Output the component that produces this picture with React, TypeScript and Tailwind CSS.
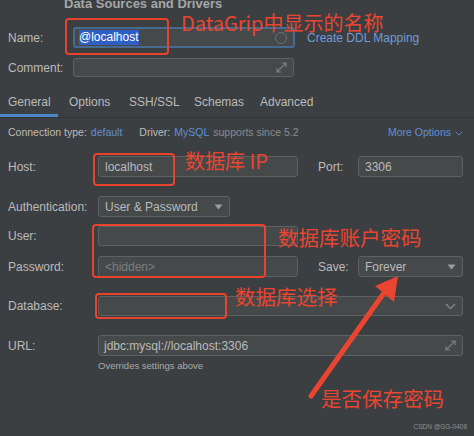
import React from "react"

// darcula-ish palette picked from the screenshot
const field = "border border-[#5e6163] bg-[#45494a] rounded-[3px]"

const Triangle = () => (
    <svg width="9" height="6" viewBox="0 0 9 6" className="shrink-0">
        <path d="M0.5 0.5 L8.5 0.5 L4.5 5.5 Z" fill="#9a9da0" />
    </svg>
)

const Chevron = ({ size = 12, color = "#8a8d90" }: { size?: number; color?: string }) => (
    <svg width={size} height={size * 0.6} viewBox="0 0 12 7" className="shrink-0">
        <path d="M1 1 L6 6 L11 1" fill="none" stroke={color} strokeWidth="1.3" />
    </svg>
)

const Expand = () => (
    <svg width="11" height="11" viewBox="0 0 11 11" className="shrink-0">
        <path
            d="M1 10 L10 1 M6 1 H10 V5 M1 6 V10 H5"
            fill="none"
            stroke="#7d8083"
            strokeWidth="1.1"
        />
    </svg>
)

const Label = ({ children, w = "w-[98px]" }: { children: React.ReactNode; w?: string }) => (
    <div className={`${w} shrink-0 pl-[8px]`}>{children}</div>
)

const Annot = ({ children, className }: { children: React.ReactNode; className: string }) => (
    <div
        className={`absolute whitespace-nowrap leading-none text-[#ea4531] font-['Noto_Sans_CJK_SC','Noto_Sans',sans-serif] ${className}`}
    >
        {children}
    </div>
)

const Box = ({ className }: { className: string }) => (
    <div className={`absolute border-2 border-[#e8432f] rounded-[4px] ${className}`} />
)

const tabs = [
    { label: "General", w: "w-[61px]" },
    { label: "Options", w: "w-[60px]" },
    { label: "SSH/SSL", w: "w-[65px]" },
    { label: "Schemas", w: "w-[66px]" },
    { label: "Advanced", w: "w-[80px]" },
]

export default function App() {
    return (
        <div className="relative w-[474px] h-[436px] overflow-hidden bg-[#3c3f41] text-[12px] text-[#bbbbbb] font-['Liberation_Sans',Arial,sans-serif]">
            {/* header, cut off at the top */}
            <div className="-mt-[3px] h-[14px] leading-[14px] pl-[64px] font-bold text-[13px] text-[#a4a6a8]">
                Data Sources and Drivers
            </div>

            {/* name */}
            <div className="mt-[16px] flex items-center h-[21px]">
                <Label w="w-[73px]">Name:</Label>
                <div className="w-[222px] h-[21px] flex items-center justify-between pl-[4px] pr-[6px] border-2 border-[#466b92] bg-[#45494a] rounded-[3px]">
                    <span className="bg-[#2f5fc4] text-white leading-[15px]">@localhost</span>
                    <div className="w-[12px] h-[12px] rounded-full border border-[#6e7174]" />
                </div>
                <div className="ml-[12px] text-[#6d9bd8]">Create DDL Mapping</div>
            </div>

            {/* comment */}
            <div className="mt-[10px] flex items-center h-[19px]">
                <Label w="w-[73px]">Comment:</Label>
                <div className={`w-[221px] h-[19px] flex items-center justify-end pr-[6px] ${field}`}>
                    <Expand />
                </div>
            </div>

            {/* tabs */}
            <div className="mt-[10px] h-[31px] flex border-b border-[#323335]">
                {tabs.map((t, i) => (
                    <div key={t.label} className={`relative ${t.w} pl-[8px] flex items-center`}>
                        {t.label}
                        {i === 0 && (
                            <div className="absolute left-0 bottom-0 w-[58px] h-[3px] bg-[#4a88c7]" />
                        )}
                    </div>
                ))}
            </div>

            {/* connection type line */}
            <div className="h-[30px] flex items-center pl-[8px] pr-[11px] text-[10.5px]">
                <span>Connection type:</span>
                <span className="ml-[4px] text-[#5e8fd6]">default</span>
                <span className="ml-[17px]">Driver:</span>
                <span className="ml-[4px] text-[#5e8fd6]">MySQL</span>
                <span className="ml-[4px] text-[#8a8c8e]">supports since 5.2</span>
                <span className="ml-auto text-[#5e8fd6] flex items-center gap-[4px]">
                    More Options
                    <Chevron size={8} color="#5e8fd6" />
                </span>
            </div>

            {/* host / port */}
            <div className="mt-[8px] flex items-center h-[21px]">
                <Label>Host:</Label>
                <div className={`w-[200px] h-[21px] flex items-center pl-[6px] ${field}`}>localhost</div>
                <div className="ml-[20px] w-[40px]">Port:</div>
                <div className={`w-[105px] h-[21px] flex items-center pl-[6px] ${field}`}>3306</div>
            </div>

            {/* auth */}
            <div className="mt-[19px] flex items-center h-[21px]">
                <Label>Authentication:</Label>
                <div className={`w-[132px] h-[21px] flex items-center justify-between pl-[6px] pr-[6px] ${field}`}>
                    User &amp; Password
                    <Triangle />
                </div>
            </div>

            {/* user */}
            <div className="mt-[9px] flex items-center h-[20px]">
                <Label>User:</Label>
                <div className={`w-[200px] h-[20px] ${field}`} />
            </div>

            {/* password / save */}
            <div className="mt-[10px] flex items-center h-[21px]">
                <Label>Password:</Label>
                <div className={`w-[200px] h-[21px] flex items-center pl-[6px] text-[#7b7e81] ${field}`}>
                    &lt;hidden&gt;
                </div>
                <div className="ml-[20px] w-[40px]">Save:</div>
                <div className={`w-[105px] h-[21px] flex items-center justify-between pl-[6px] pr-[6px] ${field}`}>
                    Forever
                    <Triangle />
                </div>
            </div>

            {/* database */}
            <div className="mt-[19px] flex items-center h-[20px]">
                <Label>Database:</Label>
                <div className={`w-[365px] h-[20px] flex items-center justify-end pr-[6px] ${field}`}>
                    <Chevron size={11} />
                </div>
            </div>

            {/* url */}
            <div className="mt-[19px] flex items-center h-[21px]">
                <Label>URL:</Label>
                <div className={`w-[365px] h-[21px] flex items-center justify-between pl-[5px] pr-[6px] ${field}`}>
                    jdbc:mysql://localhost:3306
                    <Expand />
                </div>
            </div>
            <div className="mt-[3px] pl-[98px] text-[9.5px] text-[#a9abad]">Overrides settings above</div>

            {/* watermark */}
            <div className="absolute right-[7px] bottom-[4px] text-[6.5px] text-[#8e9092]">CSDN @GG-0408</div>

            {/* red annotations drawn over the screenshot */}
            <Box className="left-[65px] top-[18px] w-[104px] h-[37px]" />
            <Box className="left-[93px] top-[153px] w-[82px] h-[33px]" />
            <Box className="left-[92px] top-[224px] w-[174px] h-[54px]" />
            <Box className="left-[95px] top-[293px] w-[132px] h-[26px]" />

            <Annot className="left-[181px] top-[13px] text-[20px]">DataGrip中显示的名称</Annot>
            <Annot className="left-[185px] top-[151px] text-[20px]">数据库 IP</Annot>
            <Annot className="left-[278px] top-[227px] text-[20.5px]">数据库账户密码</Annot>
            <Annot className="left-[235px] top-[286px] text-[20.5px]">数据库选择</Annot>
            <Annot className="left-[321px] top-[388px] text-[20.5px]">是否保存密码</Annot>

            <svg className="absolute inset-0 pointer-events-none" width="474" height="436">
                <line x1="311" y1="396" x2="386" y2="290" stroke="#ea4531" strokeWidth="5" strokeLinecap="round" />
                <polygon points="398,276 375,286 394,302" fill="#ea4531" />
            </svg>
        </div>
    )
}
